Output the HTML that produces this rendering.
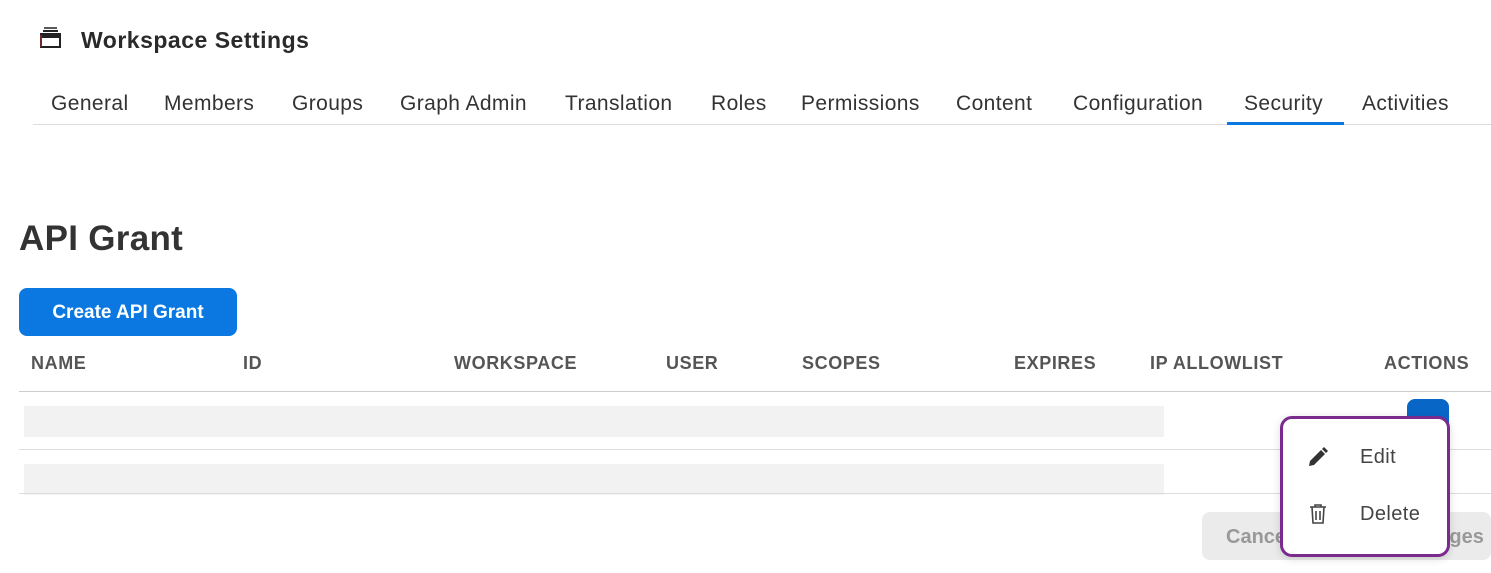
<!DOCTYPE html><html><head><style>
body{margin:0;width:1491px;height:573px;overflow:hidden;background:#fff;font-family:"Liberation Sans",sans-serif;color:#333;position:relative}
.a{position:absolute;white-space:nowrap}
.tab{position:absolute;top:92px;font-size:21px;letter-spacing:0.4px;color:#333}
.h{position:absolute;top:353px;font-size:18px;font-weight:bold;color:#555;letter-spacing:0.6px}
</style></head><body>
<svg class="a" style="left:39px;top:26px" width="24" height="24" viewBox="0 0 24 24"><rect x="2" y="8" width="19" height="13" fill="none" stroke="#222" stroke-width="2"/><rect x="2" y="8" width="19" height="4" fill="#222"/><line x1="4" y1="5" x2="19" y2="5" stroke="#222" stroke-width="2"/><line x1="5" y1="2" x2="18" y2="2" stroke="#222" stroke-width="1.5"/><line x1="2" y1="9" x2="2" y2="21" stroke="#b33" stroke-width="1"/></svg>
<div class="a" style="left:81px;top:27px;font-size:23px;font-weight:bold;color:#2a2a2a;letter-spacing:0.5px">Workspace Settings</div>
<div class="tab" style="left:51px">General</div>
<div class="tab" style="left:164px">Members</div>
<div class="tab" style="left:292px">Groups</div>
<div class="tab" style="left:400px">Graph Admin</div>
<div class="tab" style="left:565px">Translation</div>
<div class="tab" style="left:711px">Roles</div>
<div class="tab" style="left:801px">Permissions</div>
<div class="tab" style="left:956px">Content</div>
<div class="tab" style="left:1073px">Configuration</div>
<div class="tab" style="left:1244px">Security</div>
<div class="tab" style="left:1362px">Activities</div>
<div class="a" style="left:33px;top:124px;width:1458px;height:1px;background:#ddd"></div>
<div class="a" style="left:1227px;top:122px;width:117px;height:3px;background:#0a78e0"></div>
<div class="a" style="left:19px;top:219px;font-size:35px;font-weight:bold;color:#333;letter-spacing:0.3px">API Grant</div>
<div class="a" style="left:19px;top:288px;width:218px;height:48px;background:#0a78e0;border-radius:8px;color:#fff;font-weight:bold;font-size:19px;line-height:50px;text-align:center">Create API Grant</div>
<div class="h" style="left:31px">NAME</div><div class="h" style="left:243px">ID</div><div class="h" style="left:454px">WORKSPACE</div><div class="h" style="left:666px">USER</div><div class="h" style="left:802px">SCOPES</div><div class="h" style="left:1014px">EXPIRES</div><div class="h" style="left:1150px">IP ALLOWLIST</div><div class="h" style="left:1384px">ACTIONS</div>
<div class="a" style="left:19px;top:391px;width:1472px;height:1px;background:#ccc"></div>
<div class="a" style="left:24px;top:406px;width:1140px;height:31px;background:#f2f2f2"></div>
<div class="a" style="left:19px;top:449px;width:1472px;height:1px;background:#ddd"></div>
<div class="a" style="left:24px;top:464px;width:1140px;height:31px;background:#f2f2f2"></div>
<div class="a" style="left:19px;top:493px;width:1472px;height:1px;background:#ddd"></div>
<div class="a" style="left:1407px;top:399px;width:42px;height:40px;background:#0866c6;border-radius:8px"></div>
<div class="a" style="left:1202px;top:512px;width:289px;height:48px;background:#ebebeb;border-radius:8px;color:#999;font-weight:bold;font-size:20px;line-height:50px;padding-left:24px;box-sizing:border-box">Cancel&nbsp;&nbsp;&nbsp;&nbsp;&nbsp;&nbsp;&nbsp;&nbsp;&nbsp;&nbsp;Save Changes</div>
<div class="a" style="left:1280px;top:416px;width:164px;height:135px;border:3px solid #7b2a8e;border-radius:12px;background:#fff;box-shadow:0 2px 8px rgba(0,0,0,.15)"></div>
<svg class="a" style="left:1307px;top:446px" width="22" height="22" viewBox="0 0 22 22"><path d="M2 20 L3 15 L14 4 L18 8 L7 19 Z" fill="#333"/><path d="M15 3 L17 1 L21 5 L19 7 Z" fill="#333"/></svg>
<div class="a" style="left:1360px;top:446px;font-size:20px;color:#444;letter-spacing:0.4px">Edit</div>
<svg class="a" style="left:1308px;top:503px" width="20" height="22" viewBox="0 0 20 22"><path d="M2 4 H18 M7 4 V2 H13 V4 M4 4 L5 20 H15 L16 4 M8 8 V17 M12 8 V17" fill="none" stroke="#444" stroke-width="1.6"/></svg>
<div class="a" style="left:1360px;top:503px;font-size:20px;color:#444;letter-spacing:0.4px">Delete</div>
</body></html>
